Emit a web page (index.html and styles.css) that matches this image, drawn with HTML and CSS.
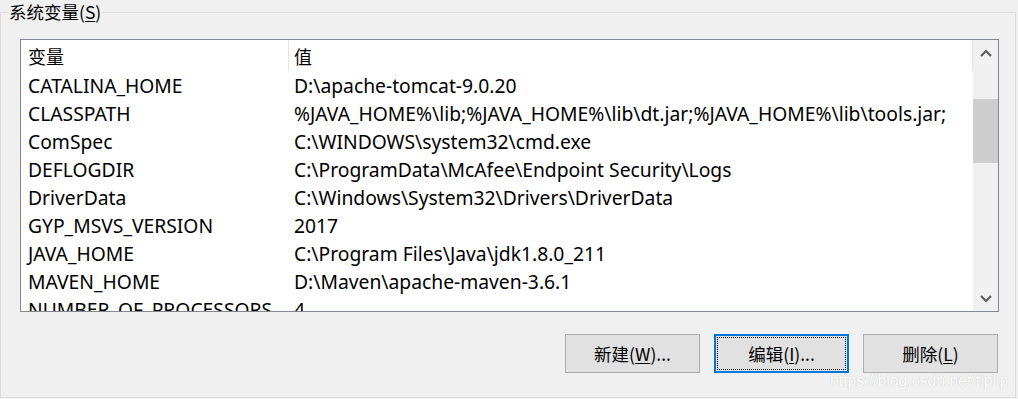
FILE: index.html
```html
<!DOCTYPE html>
<html lang="zh">
<head>
<meta charset="utf-8">
<link rel="stylesheet" href="styles.css">
</head>
<body>
<fieldset class="group">
  <legend class="group-title">系统变量(<u>S</u>)</legend>
  <div class="listbox">
    <div class="list">
      <div class="header">
        <div class="col-name">变量</div>
        <div class="col-value hsep">值</div>
        <div class="hend"></div>
      </div>
      <div class="rows">
        <div class="row"><div class="col-name">CATALINA_HOME</div><div class="col-value">D:\apache-tomcat-9.0.20</div></div>
        <div class="row"><div class="col-name">CLASSPATH</div><div class="col-value">%JAVA_HOME%\lib;%JAVA_HOME%\lib\dt.jar;%JAVA_HOME%\lib\tools.jar;</div></div>
        <div class="row"><div class="col-name">ComSpec</div><div class="col-value">C:\WINDOWS\system32\cmd.exe</div></div>
        <div class="row"><div class="col-name">DEFLOGDIR</div><div class="col-value">C:\ProgramData\McAfee\Endpoint Security\Logs</div></div>
        <div class="row"><div class="col-name">DriverData</div><div class="col-value">C:\Windows\System32\Drivers\DriverData</div></div>
        <div class="row"><div class="col-name">GYP_MSVS_VERSION</div><div class="col-value">2017</div></div>
        <div class="row"><div class="col-name">JAVA_HOME</div><div class="col-value">C:\Program Files\Java\jdk1.8.0_211</div></div>
        <div class="row"><div class="col-name">MAVEN_HOME</div><div class="col-value">D:\Maven\apache-maven-3.6.1</div></div>
        <div class="row"><div class="col-name">NUMBER_OF_PROCESSORS</div><div class="col-value">4</div></div>
      </div>
    </div>
    <div class="scrollbar">
      <div class="arrow">
        <svg width="12" height="8" viewBox="0 0 12 8"><polyline points="1,7 6,2 11,7" fill="none" stroke="#606060" stroke-width="2.2"/></svg>
      </div>
      <div class="track">
        <div class="thumb"></div>
      </div>
      <div class="arrow">
        <svg width="12" height="8" viewBox="0 0 12 8"><polyline points="1,1 6,6 11,1" fill="none" stroke="#606060" stroke-width="2.2"/></svg>
      </div>
    </div>
  </div>
  <div class="buttons">
    <button class="btn">新建(<u>W</u>)...</button>
    <button class="btn focused">编辑(<u>I</u>)...</button>
    <button class="btn">删除(<u>L</u>)</button>
  </div>
</fieldset>
<div class="watermark">https://blog.csdn.net/tiplip</div>
</body>
</html>
```
FILE: styles.css
```css
html, body {
  margin: 0;
  padding: 0;
  background: #f0f0f0;
  width: 1018px;
  height: 399px;
  overflow: hidden;
  font-family: "Noto Sans", "Noto Sans CJK SC", sans-serif;
  color: #000;
}
.group {
  margin: 0;
  width: 1016px;
  height: 398px;
  box-sizing: border-box;
  border: 1px solid #dcdcdc;
  padding: 0 0 0 19px;
}
.group-title {
  margin-left: -12px;
  padding: 0 1px;
  font-size: 17.5px;
  line-height: 24px;
  font-family: "Noto Sans CJK SC", sans-serif;
}
.group-title u, .btn u {
  text-decoration-thickness: 1px;
  text-underline-offset: 2px;
}
.listbox {
  margin-top: 15px;
  width: 979px;
  height: 273px;
  box-sizing: border-box;
  border: 1px solid #828790;
  background: #fff;
  display: flex;
  overflow: hidden;
}
.list {
  flex: 1;
  overflow: hidden;
  font-size: 19.3px;
}
.header {
  display: flex;
  height: 31px;
  align-items: center;
}
.header .col-name, .header .col-value {
  font-family: "Noto Sans CJK SC", sans-serif;
  font-size: 18px;
}
.hsep {
  border-left: 1px solid #e5e5e5;
  align-self: stretch;
  display: flex;
  align-items: center;
}
.hend {
  margin-left: auto;
  align-self: stretch;
  width: 1px;
  background: #e5e5e5;
}
.col-name {
  width: 260px;
  padding-left: 7px;
  white-space: nowrap;
  overflow: hidden;
}
.col-value {
  padding-left: 5px;
  white-space: nowrap;
}
.row {
  display: flex;
  height: 28px;
  align-items: center;
}
.row .col-value { padding-left: 6px; }
.scrollbar {
  width: 25px;
  background: #f0f0f0;
  display: flex;
  flex-direction: column;
}
.arrow {
  height: 25px;
  display: flex;
  align-items: center;
  justify-content: center;
}
.track {
  flex: 1;
  padding-top: 34px;
}
.thumb {
  height: 64px;
  background: #cdcdcd;
}
.buttons {
  display: flex;
  justify-content: flex-end;
  gap: 14px;
  margin-top: 22px;
  width: 978px;
}
.btn {
  width: 135px;
  height: 39px;
  box-sizing: border-box;
  background: #e1e1e1;
  border: 1px solid #adadad;
  font-family: "Noto Sans CJK SC", sans-serif;
  font-size: 17.5px;
  color: #000;
  padding: 0;
  position: relative;
}
.btn.focused {
  border: 2px solid #0078d7;
}
.btn.focused::after {
  content: "";
  position: absolute;
  inset: 1px;
  border: 1px dotted #000;
}
.watermark {
  position: absolute;
  left: 830px;
  top: 372px;
  white-space: nowrap;
  font-family: "Liberation Sans", sans-serif;
  font-size: 15.8px;
  color: #fafafa;
  text-shadow: 0 0 1px #d4d4d4, 0 0 1px #d4d4d4;
}
```
